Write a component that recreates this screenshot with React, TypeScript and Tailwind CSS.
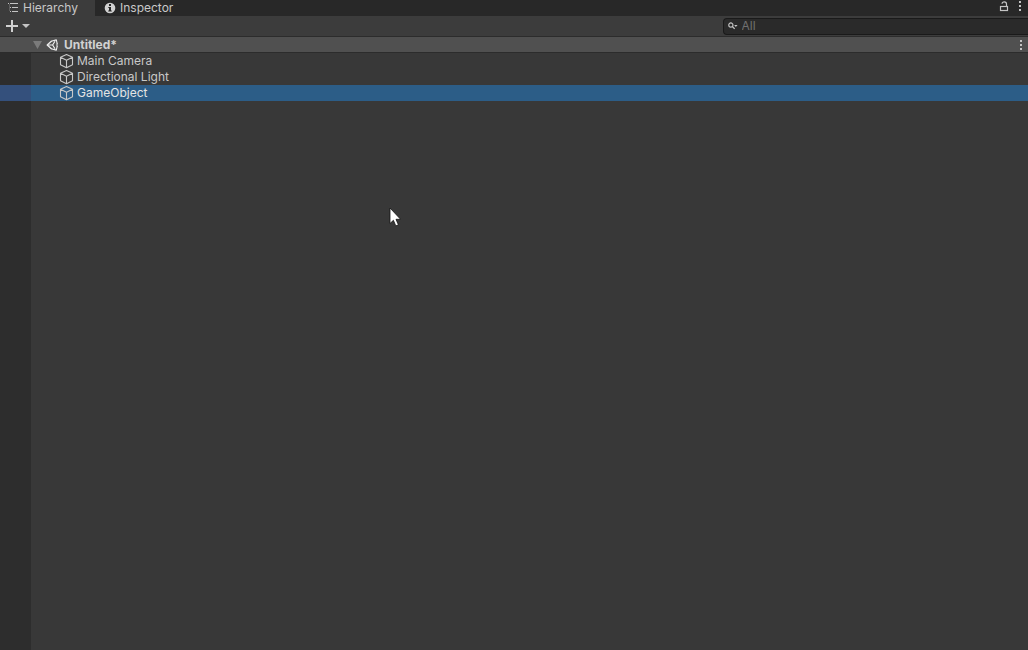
import React from "react";

const objects = [
  { name: "Main Camera", selected: false },
  { name: "Directional Light", selected: false },
  { name: "GameObject", selected: true },
];

function HierarchyIcon() {
  return (
    <svg className="w-3 h-3" viewBox="0 0 12 12" fill="#c4c4c4" aria-hidden="true">
      <path d="M1 1h1v1H1zM3 1h8v1H3zM3 5h1v1H3zM5 5h6v1H5zM3 9h1v1H3zM5 9h6v1H5z" />
      <path d="M2 2h1v7H2z" opacity=".25" />
    </svg>
  );
}

function InfoIcon() {
  return (
    <svg className="w-3 h-3" viewBox="0 0 12 12" aria-hidden="true">
      <circle cx="6" cy="6" r="5.3" fill="#d2d2d2" />
      <path d="M5 2h2v2H5zM4.3 5H7v3.6h.8v1H4.2v-1H5V6h-.7z" fill="#282828" />
    </svg>
  );
}

function LockIcon() {
  return (
    <svg className="w-3 h-3" viewBox="0 0 12 12" fill="none" stroke="#c4c4c4" aria-hidden="true">
      <rect x="2.5" y="6.5" width="7" height="4" strokeWidth="1.2" />
      <path d="M4 3.8C4.2 1.2 8.5 1 8.5 4v2.5" strokeWidth="1.2" />
    </svg>
  );
}

function DotsIcon() {
  return (
    <svg className="w-1 h-3" viewBox="0 0 4 12" fill="#c4c4c4" aria-hidden="true">
      <path d="M1 1h2v2H1zM1 5h2v2H1zM1 9h2v2H1z" />
    </svg>
  );
}

function UnityIcon() {
  return (
    <svg className="w-3 h-3" viewBox="0 0 12 12" fill="none" stroke="#eeeeee" strokeLinejoin="round" aria-hidden="true">
      <path d="M5.6 2 1.2 6l4.4 4" strokeWidth="1.3" />
      <path d="M5.2 2.2 10.3.9l1 4.2M5.2 9.8l5.1 1.3 1-4.2" strokeWidth="1.1" />
      <path d="M1.2 6h5.4M6.6 6l2.4-3.8M6.6 6 9 9.8" strokeWidth="1.2" />
      <path d="M11 4.6v2.8" strokeWidth="1" />
    </svg>
  );
}

function CubeIcon() {
  return (
    <svg className="w-4 h-4" viewBox="0 0 16 16" fill="none" stroke="#c8c8c8" strokeLinejoin="round" aria-hidden="true">
      <path d="M8.5 1.5 14.5 4.3v7.4l-6 3-6-3V4.3zM2.5 4.3l6 3 6-3M8.5 7.3v7.4" strokeWidth="1.1" />
    </svg>
  );
}

function Cursor() {
  return (
    <svg className="absolute left-[389px] top-[207px] w-3 h-5" viewBox="0 0 12 20" aria-hidden="true">
      <path d="M1 1v15.5l3.4-3.2 2.4 5.6 2.6-1.1L7 12.3h4.6z" fill="#ffffff" stroke="#111111" strokeWidth=".8" />
    </svg>
  );
}

function App() {
  return (
    <main
      className="relative flex min-h-screen flex-col overflow-hidden bg-[#383838] text-[#c8c8c8] text-xs leading-4 select-none"
      style={{ fontFamily: 'Inter, "Liberation Sans", sans-serif' }}
    >
      <header className="flex h-4 justify-between bg-[#282828]">
        <div className="flex" role="tablist">
          <button role="tab" aria-selected="true" className="flex w-[95px] items-center gap-1 bg-[#3c3c3c] pb-px pl-[7px]">
            <HierarchyIcon />
            Hierarchy
          </button>
          <button role="tab" aria-selected="false" className="flex items-center gap-1 px-[9px] pb-px">
            <InfoIcon />
            Inspector
          </button>
        </div>
        <div className="flex items-center gap-2 pr-1.5 pb-1">
          <button aria-label="Lock">
            <LockIcon />
          </button>
          <button aria-label="Tab menu">
            <DotsIcon />
          </button>
        </div>
      </header>

      <div className="flex h-5 items-center justify-between bg-[#3c3c3c]">
        <button aria-label="Create" className="flex items-center gap-1 pl-1.5">
          <svg className="w-3 h-3" viewBox="0 0 12 12" fill="#d0d0d0" aria-hidden="true">
            <path d="M5 0h2v5h5v2H7v5H5V7H0V5h5z" />
          </svg>
          <svg className="w-2 h-1" viewBox="0 0 8 4" fill="#c4c4c4" aria-hidden="true">
            <path d="M0 0h8L4 4z" />
          </svg>
        </button>
        <label className="flex h-[17px] w-[305px] items-center gap-1 rounded-l border border-r-0 border-[#1a1a1a] bg-[#2a2a2a] pl-1">
          <svg className="w-2.5 h-2.5" viewBox="0 0 10 10" fill="none" stroke="#c4c4c4" aria-hidden="true">
            <circle cx="3" cy="4" r="2.2" strokeWidth="1.2" />
            <path d="M4.6 5.6 7 8" strokeWidth="1.4" />
            <path d="M6.4 4H10L8.2 6z" fill="#c4c4c4" stroke="none" />
          </svg>
          <input
            type="text"
            aria-label="Search"
            placeholder="All"
            className="w-full min-w-0 bg-transparent text-xs leading-4 outline-none placeholder:text-[#707070]"
          />
        </label>
      </div>

      <div className="flex h-[17px] items-center justify-between border-y border-[#2c2c2c] bg-[#505050] pr-[5px] pl-8">
        <div className="flex items-center">
          <button aria-label="Collapse scene" className="mr-1 flex w-2.5 justify-center">
            <svg className="w-2.5 h-2" viewBox="0 0 10 8" fill="#7b7b7b" aria-hidden="true">
              <path d="M1 0h9L5.5 8z" />
            </svg>
          </button>
          <UnityIcon />
          <span className="ml-1.5 text-xs leading-4 font-bold text-[#d2d2d2]">Untitled*</span>
        </div>
        <button aria-label="Scene menu">
          <DotsIcon />
        </button>
      </div>

      <ul className="flex flex-1 flex-col">
        {objects.map((item) => (
          <li key={item.name} className="flex h-4">
            <div className={`w-[31px] ${item.selected ? "bg-[#34507c]" : "bg-[#2d2d2d]"}`} />
            <button
              className={`flex flex-1 items-center gap-[3px] pl-[27px] ${
                item.selected ? "bg-[#2c5d87] text-[#e4e4e4]" : ""
              }`}
            >
              <CubeIcon />
              {item.name}
            </button>
          </li>
        ))}
        <li className="flex flex-1" aria-hidden="true">
          <div className="w-[31px] bg-[#2d2d2d]" />
        </li>
      </ul>

      <Cursor />
    </main>
  );
}

export default App;
